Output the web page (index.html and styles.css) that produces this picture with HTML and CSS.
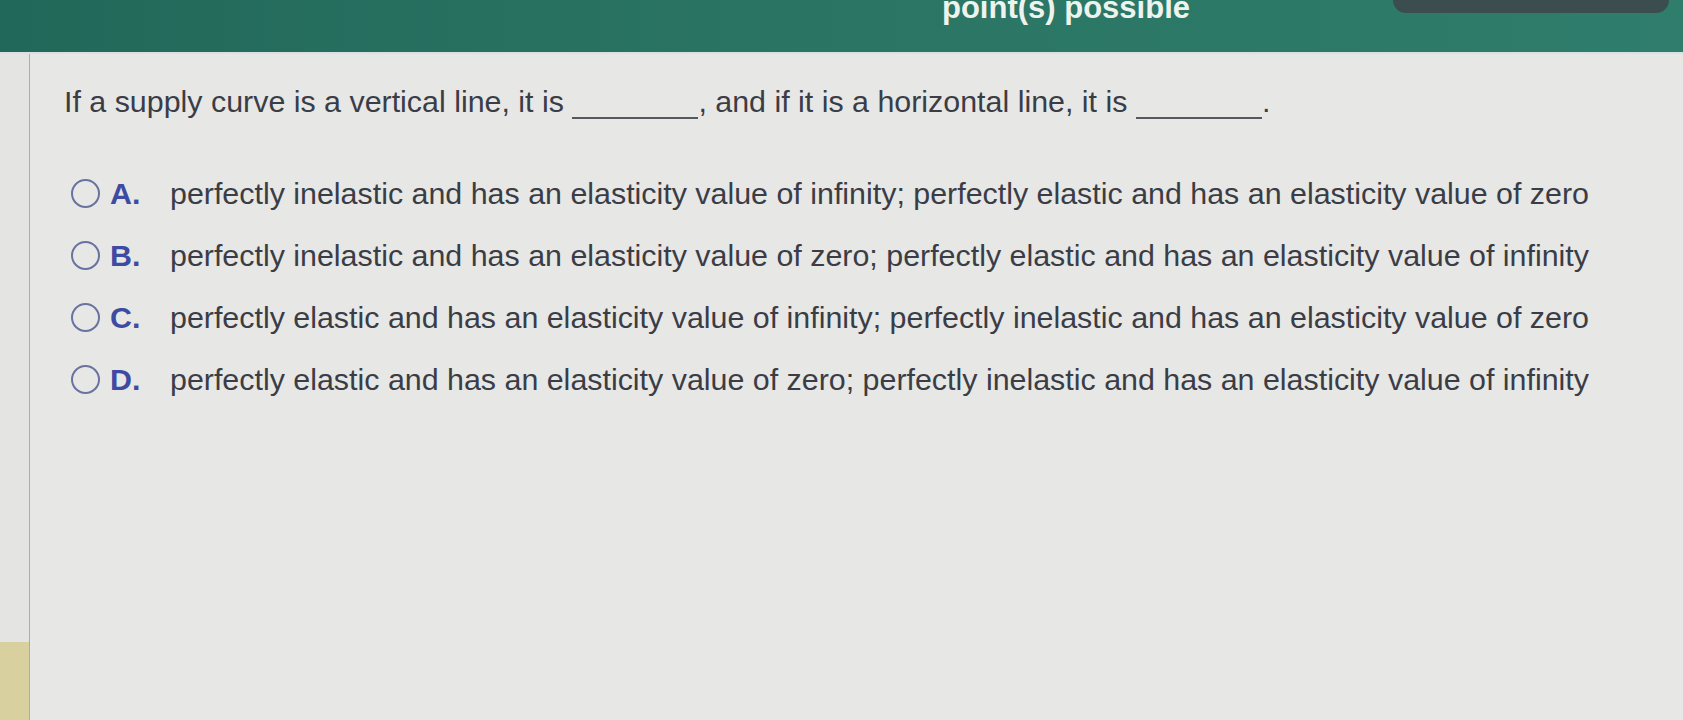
FILE: index.html
```html
<!DOCTYPE html>
<html lang="en">
<head>
<meta charset="utf-8">
<title>Question</title>
<link rel="stylesheet" href="styles.css">
</head>
<body>
<header class="header">
  <div class="points">point(s) possible</div>
  <div class="pill"></div>
</header>
<div class="page">
  <aside class="side">
    <div class="side-note"></div>
  </aside>
  <main class="content">
    <p class="question">If a supply curve is a vertical line, it is <span class="blank"></span>, and if it is a horizontal line, it is <span class="blank"></span>.</p>
    <ul class="options">
      <li class="option"><span class="radio"></span><span class="letter">A.</span><span class="text">perfectly inelastic and has an elasticity value of infinity; perfectly elastic and has an elasticity value of zero</span></li>
      <li class="option"><span class="radio"></span><span class="letter">B.</span><span class="text">perfectly inelastic and has an elasticity value of zero; perfectly elastic and has an elasticity value of infinity</span></li>
      <li class="option"><span class="radio"></span><span class="letter">C.</span><span class="text">perfectly elastic and has an elasticity value of infinity; perfectly inelastic and has an elasticity value of zero</span></li>
      <li class="option"><span class="radio"></span><span class="letter">D.</span><span class="text">perfectly elastic and has an elasticity value of zero; perfectly inelastic and has an elasticity value of infinity</span></li>
    </ul>
  </main>
</div>
</body>
</html>
```

FILE: styles.css
```css
html, body {
  margin: 0;
  padding: 0;
}
body {
  width: 1683px;
  height: 720px;
  overflow: hidden;
  background: #e7e7e5;
  font-family: "Liberation Sans", Arial, sans-serif;
  color: #3a3d46;
}
.header {
  height: 52px;
  background: linear-gradient(90deg, #22685a 0%, #2a7463 45%, #2f7d6c 100%);
  border-bottom: 2px solid #d9e2df;
  display: flex;
  align-items: flex-start;
  overflow: hidden;
}
.points {
  margin-left: 942px;
  margin-top: -8px;
  font-size: 31px;
  line-height: 1;
  font-weight: 700;
  color: #eef3ee;
  white-space: nowrap;
}
.pill {
  margin-left: 203px;
  width: 276px;
  height: 13px;
  background: #3c4d50;
  border-radius: 0 0 14px 14px;
}
.page {
  display: flex;
  height: 666px;
}
.side {
  width: 29px;
  border-right: 1.5px solid #a9aab2;
  background: #e4e5e3;
  display: flex;
  flex-direction: column;
  justify-content: flex-end;
}
.side-note {
  height: 78px;
  background: #d8d09f;
}
.content {
  flex: 1;
  padding-left: 34px;
}
.question {
  margin: 27px 0 0 0;
  font-size: 30.4px;
  line-height: 40px;
  white-space: nowrap;
}
.blank {
  display: inline-block;
  width: 126px;
  height: 30px;
  border-bottom: 2px solid #55585f;
  vertical-align: -7px;
}
.options {
  list-style: none;
  margin: 41px 0 0 0;
  padding: 0;
}
.option {
  display: flex;
  align-items: center;
  height: 62px;
  font-size: 30.4px;
  white-space: nowrap;
}
.radio {
  width: 25px;
  height: 25px;
  margin-left: 7px;
  border: 2px solid #6a72a0;
  border-radius: 50%;
  flex: none;
}
.letter {
  margin-left: 10px;
  width: 60px;
  font-weight: 700;
  color: #3d4ba2;
  flex: none;
}
.text {
  color: #3a3d46;
}
```
